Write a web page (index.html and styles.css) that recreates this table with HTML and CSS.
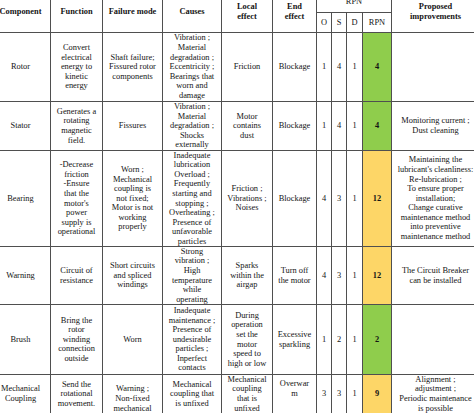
FILE: index.html
```html
<!DOCTYPE html>
<html lang="en">
<head>
<meta charset="utf-8">
<title>FMEA table</title>
<link rel="stylesheet" href="styles.css">
</head>
<body>
<div class="sheet">
  <div class="fmea">
    <div class="c hd tall">Component</div>
    <div class="c hd tall">Function</div>
    <div class="c hd tall">Failure mode</div>
    <div class="c hd tall">Causes</div>
    <div class="c hd tall">Local<br>effect</div>
    <div class="c hd tall">End<br>effect</div>
    <div class="c group">RPN</div>
    <div class="c hd tall">Proposed<br>improvements</div>
    <div class="c">O</div>
    <div class="c">S</div>
    <div class="c">D</div>
    <div class="c">RPN</div>

    <div class="c">Rotor</div>
    <div class="c">Convert<br>electrical<br>energy to<br>kinetic<br>energy</div>
    <div class="c">Shaft failure;<br>Fissured rotor<br>components</div>
    <div class="c">Vibration ;<br>Material<br>degradation ;<br>Eccentricity ;<br>Bearings that<br>worn and<br>damage</div>
    <div class="c">Friction</div>
    <div class="c">Blockage</div>
    <div class="c">1</div>
    <div class="c">4</div>
    <div class="c">1</div>
    <div class="c score green">4</div>
    <div class="c"></div>

    <div class="c">Stator</div>
    <div class="c">Generates a<br>rotating<br>magnetic<br>field.</div>
    <div class="c">Fissures</div>
    <div class="c">Vibration ;<br>Material<br>degradation ;<br>Shocks<br>externally</div>
    <div class="c">Motor<br>contains<br>dust</div>
    <div class="c">Blockage</div>
    <div class="c">1</div>
    <div class="c">4</div>
    <div class="c">1</div>
    <div class="c score green">4</div>
    <div class="c">Monitoring current ;<br>Dust cleaning</div>

    <div class="c">Bearing</div>
    <div class="c">-Decrease<br>friction<br>-Ensure<br>that the<br>motor's<br>power<br>supply is<br>operational</div>
    <div class="c">Worn ;<br>Mechanical<br>coupling is<br>not fixed;<br>Motor is not<br>working<br>properly</div>
    <div class="c">Inadequate<br>lubrication<br>Overload ;<br>Frequently<br>starting and<br>stopping ;<br>Overheating ;<br>Presence of<br>unfavorable<br>particles</div>
    <div class="c">Friction ;<br>Vibrations ;<br>Noises</div>
    <div class="c">Blockage</div>
    <div class="c">4</div>
    <div class="c">3</div>
    <div class="c">1</div>
    <div class="c score yellow">12</div>
    <div class="c">Maintaining the<br>lubricant's cleanliness:<br>Re-lubrication ;<br>To ensure proper<br>installation;<br>Change curative<br>maintenance method<br>into preventive<br>maintenance method</div>

    <div class="c">Warning</div>
    <div class="c">Circuit of<br>resistance</div>
    <div class="c">Short circuits<br>and spliced<br>windings</div>
    <div class="c">Strong<br>vibration ;<br>High<br>temperature<br>while<br>operating</div>
    <div class="c">Sparks<br>within the<br>airgap</div>
    <div class="c">Turn off<br>the motor</div>
    <div class="c">4</div>
    <div class="c">3</div>
    <div class="c">1</div>
    <div class="c score yellow">12</div>
    <div class="c">The Circuit Breaker<br>can be installed</div>

    <div class="c">Brush</div>
    <div class="c">Bring the<br>rotor<br>winding<br>connection<br>outside</div>
    <div class="c">Worn</div>
    <div class="c">Inadequate<br>maintenance ;<br>Presence of<br>undesirable<br>particles ;<br>Inperfect<br>contacts</div>
    <div class="c">During<br>operation<br>set the<br>motor<br>speed to<br>high or low</div>
    <div class="c">Excessive<br>sparkling</div>
    <div class="c">1</div>
    <div class="c">2</div>
    <div class="c">1</div>
    <div class="c score green">2</div>
    <div class="c"></div>

    <div class="c last">Mechanical<br>Coupling</div>
    <div class="c last">Send the<br>rotational<br>movement.</div>
    <div class="c last push-down">Warning ;<br>Non-fixed<br>mechanical<br>coupling</div>
    <div class="c last">Mechanical<br>coupling that<br>is unfixed</div>
    <div class="c last">Mechanical<br>coupling<br>that is<br>unfixed</div>
    <div class="c last push-up">Overwar<br>m</div>
    <div class="c last">3</div>
    <div class="c last">3</div>
    <div class="c last">1</div>
    <div class="c last score yellow">9</div>
    <div class="c last">Alignment ;<br>adjustment ;<br>Periodic maintenance<br>is possible</div>
  </div>
</div>
</body>
</html>
```

FILE: styles.css
```css
html, body {
  margin: 0;
  padding: 0;
  background: #ffffff;
}

.sheet {
  width: 474px;
  height: 413px;
  overflow: hidden;
}

.fmea {
  display: grid;
  grid-template-columns: 60px 52px 60px 59px 51px 44px 15px 15px 16px 29px 88px;
  grid-template-rows: 21px 20px 69px 49px 96px 58px 70px 38px;
  width: 489px;
  margin: -8px 0 0 -9px;
  font-family: "Liberation Serif", "Times New Roman", serif;
  font-size: 8.4px;
  line-height: 9.6px;
  color: #141414;
}

.c {
  display: flex;
  align-items: center;
  justify-content: center;
  text-align: center;
  white-space: nowrap;
  min-width: 0;
  box-sizing: border-box;
  border-right: 1px solid #4f4f4f;
  border-bottom: 1px solid #4f4f4f;
}

.hd {
  font-weight: bold;
}

.tall {
  grid-row: span 2;
}

.group {
  grid-column: span 4;
}

.score {
  font-weight: bold;
}

.green {
  background: #8fcd4c;
}

.yellow {
  background: #fdd667;
}

.last {
  border-bottom: none;
}

.push-down {
  padding-top: 19px;
}

.push-up {
  padding-bottom: 10px;
}
```
